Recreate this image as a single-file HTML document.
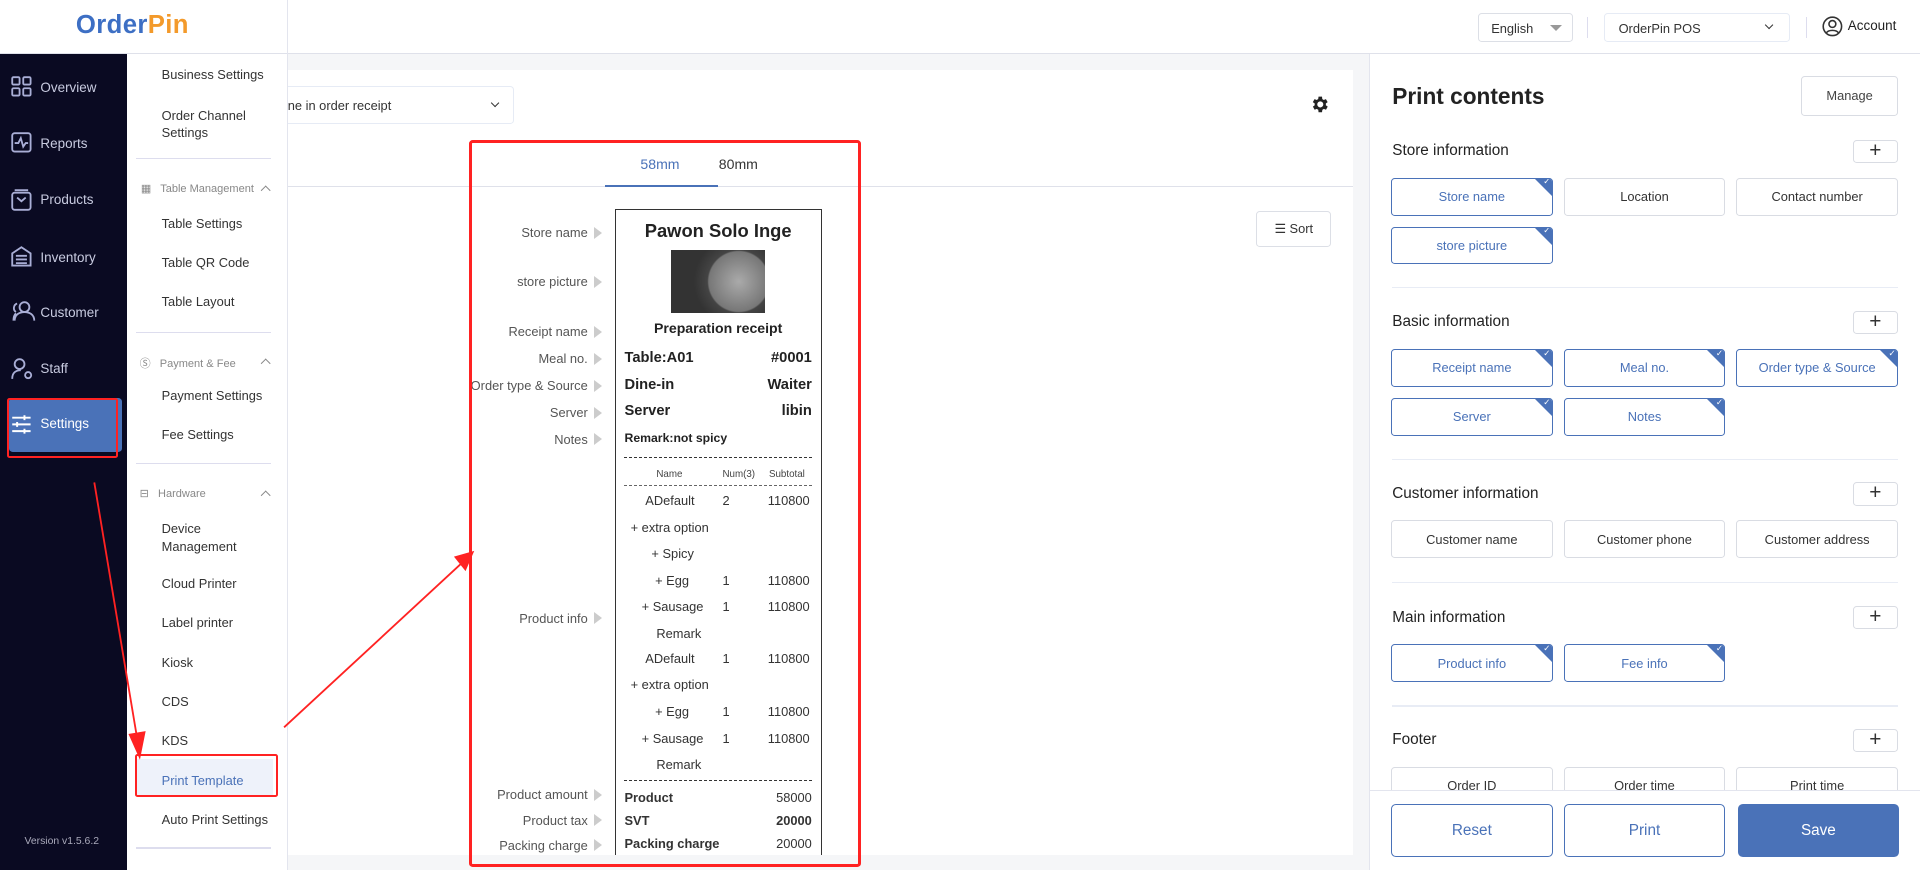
<!DOCTYPE html>
<html><head><meta charset="utf-8"><style>
*{box-sizing:border-box;margin:0;padding:0}
html,body{width:1920px;height:870px;overflow:hidden;background:#fff}
#w{zoom:1.2245;position:relative;width:1568px;height:711px;font-family:"Liberation Sans",sans-serif;color:#333;font-size:11px}
.a{position:absolute;white-space:nowrap}
.nav{color:#c8cbe0;font-size:11px;left:33px}
.ni{position:absolute;left:9px}
.sm{left:132px;font-size:10.5px;color:#333}
.sh{left:131px;font-size:9px;color:#888}
.car{position:absolute;left:214px;width:6px;height:6px;border-left:1.2px solid #888;border-top:1.2px solid #888;transform:rotate(45deg)}
.dv{position:absolute;left:111px;width:110px;height:1px;background:#dde}
.lb{font-size:10.5px;color:#555;text-align:right;width:200px}
.tri{position:absolute;width:0;height:0;border-left:7px solid #ccc;border-top:5px solid transparent;border-bottom:5px solid transparent}
.rc{font-size:10.5px;color:#333}
.chip{position:absolute;width:132px;height:31px;border:1px solid #d9dce3;border-radius:3px;font-size:10.5px;display:flex;align-items:center;justify-content:center;color:#333;overflow:hidden}
.chip.on{border-color:#4a72b8;color:#4a72b8}
.chip.on:after{content:"";position:absolute;right:0;top:0;border-top:14px solid #4a72b8;border-left:14px solid transparent}
.chip.on:before{content:"✓";position:absolute;right:1px;top:-2px;color:#fff;font-size:7px;z-index:2}
.st{left:1137px;font-size:12.5px;color:#222}
.plus{position:absolute;left:1513px;width:37px;height:19px;border:1px solid #d9dce3;border-radius:3px;text-align:center;font-size:17px;line-height:17px;color:#333}
.hr{position:absolute;left:1137px;width:413px;height:1px;background:#e8ecf5}
.bt{position:absolute;top:657px;width:132px;height:43px;border:1px solid #4a72b8;border-radius:4px;color:#4a72b8;font-size:12.5px;display:flex;align-items:center;justify-content:center}
</style></head><body><div id="w">
<div class="a" style="left:0;top:43px;width:1568px;height:1px;background:#dfe1ea"></div>
<div class="a" style="left:234px;top:0;width:1px;height:711px;background:#e3e5ee"></div>
<div class="a" style="left:62px;top:9px;font-size:21px;font-weight:bold;color:#3d6fc4;letter-spacing:0.3px">Order<span style="color:#f39a2b">Pin</span></div>
<div class="a" style="left:1207px;top:11px;width:78px;height:23px;border:1px solid #dcdfe6;border-radius:3px;font-size:10.5px;padding:5px 0 0 10px">English<span style="position:absolute;left:58px;top:9px;border-top:5px solid #999;border-left:5px solid transparent;border-right:5px solid transparent"></span></div>
<div class="a" style="left:1296px;top:14px;width:1px;height:17px;background:#dde"></div>
<div class="a" style="left:1310px;top:11px;width:152px;height:23px;border:1px solid #e6ebf5;border-radius:3px;font-size:10.5px;padding:5px 0 0 11px">OrderPin POS<span style="position:absolute;left:131px;top:6px;width:5px;height:5px;border-right:1.2px solid #333;border-bottom:1.2px solid #333;transform:rotate(45deg)"></span></div>
<div class="a" style="left:1475px;top:14px;width:1px;height:17px;background:#dde"></div>
<svg class="a" style="left:1488px;top:13px" width="17" height="17" viewBox="0 0 17 17"><circle cx="8.5" cy="8.5" r="7.5" fill="none" stroke="#333" stroke-width="1.3"/><circle cx="8.5" cy="6.5" r="2.8" fill="none" stroke="#333" stroke-width="1.3"/><path d="M3.5 14c1.5-3 8.5-3 10 0" fill="none" stroke="#333" stroke-width="1.3"/></svg>
<div class="a" style="left:1509px;top:15px;font-size:11px;color:#222">Account</div>
<div class="a" style="left:0;top:44px;width:104px;height:667px;background:#0a0a22"></div>
<svg class="ni" style="top:62px" width="17" height="17"><g fill="none" stroke="#a9aed6" stroke-width="1.5"><rect x="1" y="1" width="6" height="6" rx="1"/><rect x="10" y="1" width="6" height="6" rx="1"/><rect x="1" y="10" width="6" height="6" rx="1"/><rect x="10" y="10" width="6" height="6" rx="1"/></g></svg>
<div class="a nav" style="top:65px">Overview</div>
<svg class="ni" style="top:108px" width="17" height="17"><g fill="none" stroke="#a9aed6" stroke-width="1.5"><rect x="1" y="1" width="15" height="15" rx="2"/><path d="M3 9h3l2-4 2 7 2-3h2"/></g></svg>
<div class="a nav" style="top:111px">Reports</div>
<svg class="ni" style="top:154px" width="17" height="18"><g fill="none" stroke="#a9aed6" stroke-width="1.5"><rect x="1" y="3" width="15" height="14" rx="2"/><path d="M3 1h11M5 7l3.5 3 3.5-3"/></g></svg>
<div class="a nav" style="top:157px">Products</div>
<svg class="ni" style="top:201px" width="17" height="17"><g fill="none" stroke="#a9aed6" stroke-width="1.5"><path d="M1 6l7.5-5 7.5 5v10H1z"/><path d="M4 8h9M4 11h9M4 14h9"/></g></svg>
<div class="a nav" style="top:204px">Inventory</div>
<svg class="ni" style="top:246px" width="20" height="17"><g fill="none" stroke="#a9aed6" stroke-width="1.5"><circle cx="11" cy="5" r="4"/><path d="M3 16c0-5 4-7 8-7s8 2 8 7M5 2a4 4 0 0 0-1 7M2 16c0-3 1-5 2-6"/></g></svg>
<div class="a nav" style="top:249px">Customer</div>
<svg class="ni" style="top:292px" width="18" height="18"><g fill="none" stroke="#a9aed6" stroke-width="1.5"><circle cx="7" cy="5" r="4"/><path d="M1 17c0-5 3-7 7-7"/><circle cx="14" cy="14" r="2.5"/></g></svg>
<div class="a nav" style="top:295px">Staff</div>
<div class="a" style="left:7px;top:325px;width:93px;height:44px;background:#4a72b8;border-radius:3px"></div>
<svg class="ni" style="top:338px" width="17" height="17"><g stroke="#fff" stroke-width="1.6"><path d="M1 3h15M1 8.5h15M1 14h15"/><path d="M11 1v4M5 6.5v4M11 12v4"/></g></svg>
<div class="a" style="left:33px;top:340px;color:#fff;font-size:11px">Settings</div>
<div class="a" style="left:6px;top:325px;width:90px;height:49px;border:2px solid #f22;border-radius:2px"></div>
<div class="a" style="left:20px;top:683px;color:#aab;font-size:8.5px">Version v1.5.6.2</div>
<div class="a sm" style="top:55px">Business Settings</div>
<div class="a sm" style="top:87px;line-height:14px">Order Channel<br>Settings</div>
<div class="dv" style="top:129px"></div>
<div class="a sh" style="top:149px;left:115px">▦&nbsp;&nbsp; Table Management</div><div class="car" style="top:153px"></div>
<div class="a sm" style="top:176px">Table Settings</div>
<div class="a sm" style="top:208px">Table QR Code</div>
<div class="a sm" style="top:240px">Table Layout</div>
<div class="dv" style="top:271px"></div>
<div class="a sh" style="top:290px;left:114px">Ⓢ&nbsp;&nbsp; Payment &amp; Fee</div><div class="car" style="top:294px"></div>
<div class="a sm" style="top:317px">Payment Settings</div>
<div class="a sm" style="top:349px">Fee Settings</div>
<div class="dv" style="top:378px"></div>
<div class="a sh" style="top:398px;left:114px">⊟&nbsp;&nbsp; Hardware</div><div class="car" style="top:402px"></div>
<div class="a sm" style="top:425px;line-height:14px">Device<br>Management</div>
<div class="a sm" style="top:470px">Cloud Printer</div>
<div class="a sm" style="top:502px">Label printer</div>
<div class="a sm" style="top:535px">Kiosk</div>
<div class="a sm" style="top:567px">CDS</div>
<div class="a sm" style="top:599px">KDS</div>
<div class="a" style="left:111px;top:620px;width:112px;height:30px;background:#eef2fa"></div>
<div class="a sm" style="top:631px;color:#4a72b8">Print Template</div>
<div class="a" style="left:110px;top:616px;width:117px;height:35px;border:2px solid #f22;border-radius:2px"></div>
<div class="a sm" style="top:663px">Auto Print Settings</div>
<div class="dv" style="top:692px"></div>
<div class="a" style="left:235px;top:44px;width:883px;height:667px;background:#f5f6f8"></div>
<div class="a" style="left:235px;top:57px;width:870px;height:641px;background:#fff"></div>
<div class="a" style="left:235px;top:70px;width:185px;height:31px;border:1px solid #e6ebf5;border-left:none;border-radius:0 3px 3px 0;font-size:10.5px;padding:9px 0 0 0">ne in order receipt<span style="position:absolute;left:167px;top:11px;width:5px;height:5px;border-right:1.2px solid #333;border-bottom:1.2px solid #333;transform:rotate(45deg)"></span></div>
<svg class="a" style="left:1069px;top:77px" width="17" height="17" viewBox="0 0 24 24"><path fill="#222" d="M19.4 13a7.5 7.5 0 0 0 0-2l2.1-1.6-2-3.5-2.5 1a7 7 0 0 0-1.7-1L15 3h-4l-.4 2.9a7 7 0 0 0-1.7 1l-2.5-1-2 3.5L6.6 11a7.5 7.5 0 0 0 0 2l-2.1 1.6 2 3.5 2.5-1a7 7 0 0 0 1.7 1L11 21h4l.4-2.9a7 7 0 0 0 1.7-1l2.5 1 2-3.5zM13 15.5a3.5 3.5 0 1 1 0-7 3.5 3.5 0 0 1 0 7z"/></svg>
<div class="a" style="left:235px;top:152px;width:870px;height:1px;background:#dfe1ea"></div>
<div class="a" style="left:523px;top:127px;font-size:11.5px;color:#4a72b8">58mm</div>
<div class="a" style="left:494px;top:151px;width:92px;height:2px;background:#4a72b8"></div>
<div class="a" style="left:587px;top:127px;font-size:11.5px;color:#333">80mm</div>
<div class="a" style="left:1026px;top:172px;width:61px;height:30px;border:1px solid #dcdfe6;border-radius:3px;font-size:10.5px;padding:8px 0 0 14px">☰ Sort</div>
<div class="a lb" style="left:280px;top:184px">Store name</div>
<div class="a lb" style="left:280px;top:224px">store picture</div>
<div class="a lb" style="left:280px;top:265px">Receipt name</div>
<div class="a lb" style="left:280px;top:287px">Meal no.</div>
<div class="a lb" style="left:280px;top:309px">Order type &amp; Source</div>
<div class="a lb" style="left:280px;top:331px">Server</div>
<div class="a lb" style="left:280px;top:353px">Notes</div>
<div class="a lb" style="left:280px;top:499px">Product info</div>
<div class="a lb" style="left:280px;top:643px">Product amount</div>
<div class="a lb" style="left:280px;top:664px">Product tax</div>
<div class="a lb" style="left:280px;top:684px">Packing charge</div>
<div class="tri" style="left:485px;top:185px"></div><div class="tri" style="left:485px;top:225px"></div><div class="tri" style="left:485px;top:266px"></div><div class="tri" style="left:485px;top:288px"></div><div class="tri" style="left:485px;top:310px"></div><div class="tri" style="left:485px;top:332px"></div><div class="tri" style="left:485px;top:354px"></div><div class="tri" style="left:485px;top:500px"></div><div class="tri" style="left:485px;top:644px"></div><div class="tri" style="left:485px;top:665px"></div><div class="tri" style="left:485px;top:685px"></div>
<div class="a" style="left:502px;top:171px;width:169px;height:540px;border:1px solid #333;border-bottom:none;background:#fff"></div>
<div class="a" style="left:502px;top:180px;width:169px;text-align:center;font-size:15px;font-weight:bold;color:#222">Pawon Solo Inge</div>
<div class="a" style="left:548px;top:204px;width:77px;height:52px;background:radial-gradient(circle at 72% 50%,#aaa 0,#777 40%,#444 42%,#333 60%),#333"></div>
<div class="a" style="left:502px;top:261px;width:169px;text-align:center;font-size:11.5px;font-weight:bold;color:#222">Preparation receipt</div>
<div class="a" style="left:510px;top:286px;font-size:12px;font-weight:bold;color:#222">Table:A01</div><div class="a" style="left:600px;width:63px;text-align:right;top:286px;font-size:12px;font-weight:bold;color:#222">#0001</div>
<div class="a" style="left:510px;top:308px;font-size:12px;font-weight:bold;color:#222">Dine-in</div><div class="a" style="left:600px;width:63px;text-align:right;top:308px;font-size:12px;font-weight:bold;color:#222">Waiter</div>
<div class="a" style="left:510px;top:329px;font-size:12px;font-weight:bold;color:#222">Server</div><div class="a" style="left:600px;width:63px;text-align:right;top:329px;font-size:12px;font-weight:bold;color:#222">libin</div>
<div class="a" style="left:510px;top:352px;font-size:10px;font-weight:bold;color:#222">Remark:not spicy</div>
<div class="a" style="left:510px;top:373px;width:153px;border-top:1px dashed #333"></div>
<div class="a" style="left:510px;top:383px;width:153px;font-size:8px;color:#444"><span class="a" style="left:26px">Name</span><span class="a" style="left:80px">Num(3)</span><span class="a" style="left:118px">Subtotal</span></div>
<div class="a" style="left:510px;top:396px;width:153px;border-top:1px dashed #666"></div>
<div class="a rc" style="left:527px;top:403px">ADefault</div><div class="a rc" style="left:590px;top:403px">2</div><div class="a rc" style="left:627px;top:403px">110800</div>
<div class="a rc" style="left:515px;top:425px">+ extra option</div>
<div class="a rc" style="left:532px;top:446px">+ Spicy</div>
<div class="a rc" style="left:535px;top:468px">+ Egg</div><div class="a rc" style="left:590px;top:468px">1</div><div class="a rc" style="left:627px;top:468px">110800</div>
<div class="a rc" style="left:524px;top:489px">+ Sausage</div><div class="a rc" style="left:590px;top:489px">1</div><div class="a rc" style="left:627px;top:489px">110800</div>
<div class="a rc" style="left:536px;top:511px">Remark</div>
<div class="a rc" style="left:527px;top:532px">ADefault</div><div class="a rc" style="left:590px;top:532px">1</div><div class="a rc" style="left:627px;top:532px">110800</div>
<div class="a rc" style="left:515px;top:553px">+ extra option</div>
<div class="a rc" style="left:535px;top:575px">+ Egg</div><div class="a rc" style="left:590px;top:575px">1</div><div class="a rc" style="left:627px;top:575px">110800</div>
<div class="a rc" style="left:524px;top:597px">+ Sausage</div><div class="a rc" style="left:590px;top:597px">1</div><div class="a rc" style="left:627px;top:597px">110800</div>
<div class="a rc" style="left:536px;top:618px">Remark</div>
<div class="a" style="left:510px;top:637px;width:153px;border-top:1px dashed #333"></div>
<div class="a rc" style="left:510px;top:645px;font-weight:bold">Product</div><div class="a rc" style="left:600px;width:63px;text-align:right;top:645px">58000</div>
<div class="a rc" style="left:510px;top:664px;font-weight:bold">SVT</div><div class="a rc" style="left:600px;width:63px;text-align:right;top:664px;font-weight:bold">20000</div>
<div class="a rc" style="left:510px;top:683px;font-weight:bold">Packing charge</div><div class="a rc" style="left:600px;width:63px;text-align:right;top:683px">20000</div>
<div class="a" style="left:235px;top:698px;width:883px;height:13px;background:#f5f6f8"></div>
<div class="a" style="left:383px;top:114px;width:320px;height:594px;border:2.5px solid #f22;border-radius:3px"></div>
<svg class="a" style="left:0;top:0" width="1568" height="711"><g stroke="#f22" stroke-width="1.5" fill="#f22"><line x1="77" y1="394" x2="112" y2="603"/><polygon points="106,600 118,598 114,618"/><line x1="232" y1="594" x2="378" y2="459"/><polygon points="372,455 386,451 380,465"/></g></svg>
<div class="a" style="left:1118px;top:44px;width:1px;height:667px;background:#e3e5ee"></div>
<div class="a" style="left:1137px;top:68px;font-size:18.5px;font-weight:bold;color:#222">Print contents</div>
<div class="a" style="left:1471px;top:62px;width:79px;height:33px;border:1px solid #d9dce3;border-radius:3px;font-size:10.5px;color:#444;text-align:center;line-height:31px">Manage</div>
<div class="a st" style="top:116px">Store information</div><div class="plus" style="top:114px">+</div>
<div class="chip on" style="left:1136px;top:145px">Store name</div><div class="chip" style="left:1277px;top:145px">Location</div><div class="chip" style="left:1418px;top:145px">Contact number</div>
<div class="chip on" style="left:1136px;top:185px">store picture</div>
<div class="hr" style="top:234px"></div>
<div class="a st" style="top:256px">Basic information</div><div class="plus" style="top:254px">+</div>
<div class="chip on" style="left:1136px;top:285px">Receipt name</div><div class="chip on" style="left:1277px;top:285px">Meal no.</div><div class="chip on" style="left:1418px;top:285px">Order type &amp; Source</div>
<div class="chip on" style="left:1136px;top:325px">Server</div><div class="chip on" style="left:1277px;top:325px">Notes</div>
<div class="hr" style="top:375px"></div>
<div class="a st" style="top:396px">Customer information</div><div class="plus" style="top:394px">+</div>
<div class="chip" style="left:1136px;top:425px">Customer name</div><div class="chip" style="left:1277px;top:425px">Customer phone</div><div class="chip" style="left:1418px;top:425px">Customer address</div>
<div class="hr" style="top:475px"></div>
<div class="a st" style="top:497px">Main information</div><div class="plus" style="top:495px">+</div>
<div class="chip on" style="left:1136px;top:526px">Product info</div><div class="chip on" style="left:1277px;top:526px">Fee info</div>
<div class="hr" style="top:576px"></div>
<div class="a st" style="top:597px">Footer</div><div class="plus" style="top:595px">+</div>
<div class="chip" style="left:1136px;top:626px">Order ID</div><div class="chip" style="left:1277px;top:626px">Order time</div><div class="chip" style="left:1418px;top:626px">Print time</div>
<div class="a" style="left:1119px;top:645px;width:449px;height:66px;background:#fff;border-top:1px solid #e3e5ee"></div>
<div class="bt" style="left:1136px">Reset</div><div class="bt" style="left:1277px">Print</div><div class="bt" style="left:1419px;background:#4a72b8;color:#fff">Save</div>
</div></body></html>
